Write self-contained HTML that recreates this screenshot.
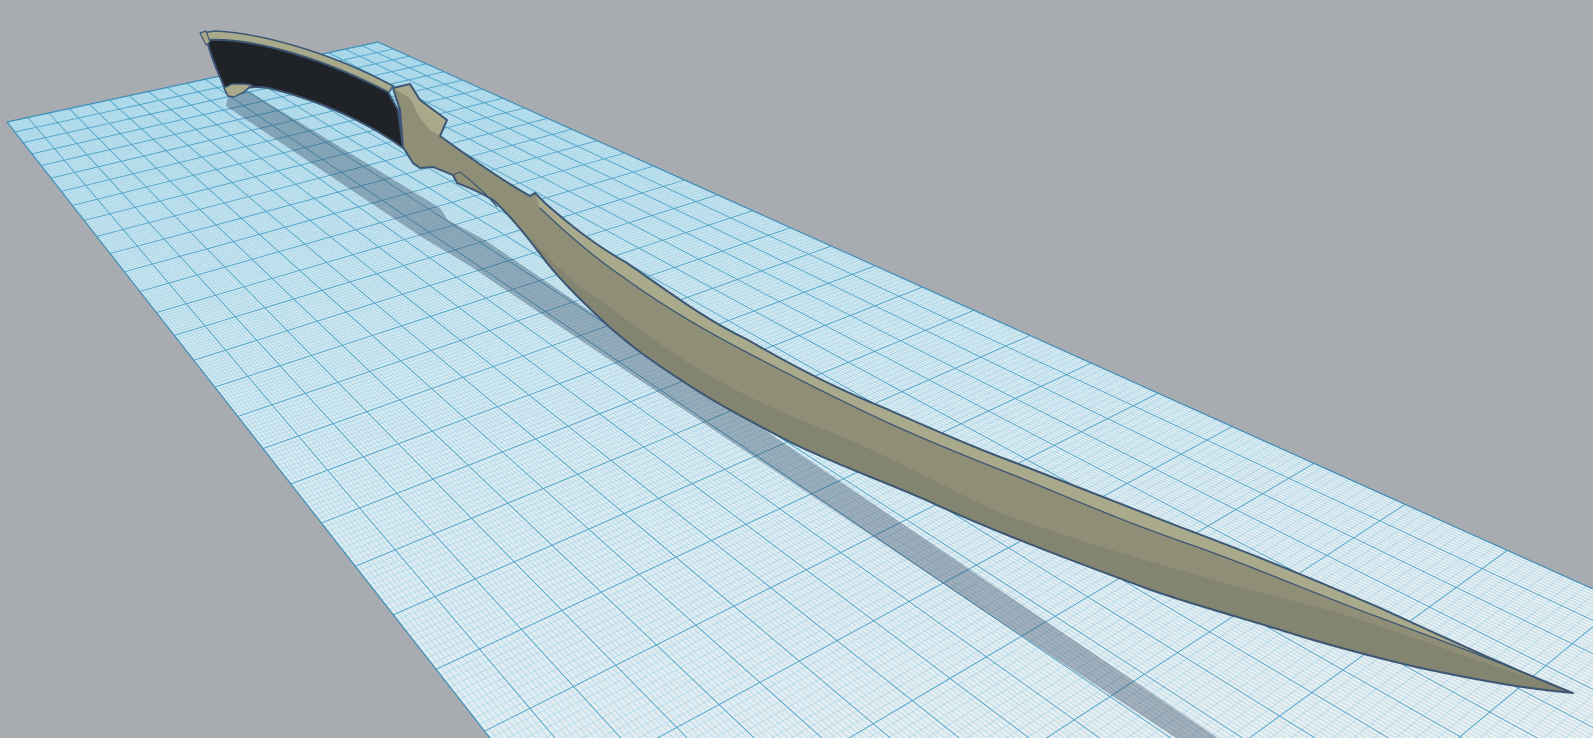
<!DOCTYPE html>
<html><head><meta charset="utf-8">
<style>
html,body{margin:0;padding:0;background:#a8acb0;overflow:hidden;width:1593px;height:738px}
svg{display:block;position:absolute;left:0;top:0}
</style></head>
<body>
<svg id="s" width="1593" height="738" viewBox="0 0 1593 738" xmlns="http://www.w3.org/2000/svg">
<defs>
<clipPath id="pc"><path d="M7,122 L378,42 L1593,589 L1593,738 L490,738 Z"/></clipPath>
<linearGradient id="pg" x1="0" y1="0" x2="1" y2="1">
<stop offset="0" stop-color="#c8e3ee"/><stop offset="0.45" stop-color="#dcebf1"/><stop offset="1" stop-color="#eaeef0"/>
</linearGradient>
</defs>
<path d="M7,122 L378,42 L1593,589 L1593,738 L490,738 Z" fill="url(#pg)"/>
<g id="grid" clip-path="url(#pc)"></g>
<path d="M7,122 L378,42 L1593,589 M490,738 L7,122" fill="none" stroke="#3f8fb8" stroke-width="1.2"/>
<!-- shadow -->
<path d="M230,90 L250,92 L440,208 L448,220 L485,240 L1000,590 L1218,738 L1176,738 L985,612 L470,266 L420,236 L226,106 Z" fill="rgba(40,60,85,0.35)"/>
<!-- blade -->
<g stroke-linejoin="round">
<path d="M393,88 L410,84 L420,100 L447,120 L440,136 C480,165 510,185 530,196 L535,193 L545,203 C570,225 595,245 627,263 C680,300 710,322 748,340 C800,370 840,390 882,407 C930,428 970,446 1016,463 C1080,488 1130,508 1180,527 C1250,553 1310,578 1378,607 C1450,640 1510,668 1573,693 C1540,690 1500,685 1416,667 C1370,656 1340,648 1303,637 C1250,620 1200,607 1151,590 C1070,560 990,530 926,500 C880,480 840,466 792,443 C750,421 715,403 681,380 C650,360 628,344 605,323 C585,304 565,285 547,263 C530,240 510,215 493,200 C480,192 470,188 457,183 L453,175 L433,167 L420,168 L413,163 L403,147 L400,110 Z" fill="#8e8f76"/>
<path d="M525,230 C550,262 575,285 600,300 C640,330 670,352 700,370 C750,400 800,420 850,440 C900,462 950,490 1000,513 C1060,535 1120,553 1180,570 C1240,588 1290,600 1340,613 C1420,640 1500,668 1573,693 C1540,690 1500,685 1416,667 C1370,656 1340,648 1303,637 C1250,620 1200,607 1151,590 C1070,560 990,530 926,500 C880,480 840,466 792,443 C750,421 715,403 681,380 C650,360 628,344 605,323 C585,304 565,285 547,263 C540,252 532,240 525,230 Z" fill="#848570"/>
<path d="M535,193 L545,203 C570,225 595,245 627,263 C680,300 710,322 748,340 C800,370 840,390 882,407 C930,428 970,446 1016,463 C1080,488 1130,508 1180,527 C1250,553 1310,578 1378,607 C1450,640 1510,668 1573,693 C1500,662 1440,640 1378,617 C1310,592 1250,565 1180,541 C1120,520 1070,498 1016,476 C970,458 925,440 882,420 C835,398 790,375 748,353 C700,328 660,304 623,277 C595,258 565,232 540,208 Z" fill="#a8aa8b"/>
<path d="M393,88 L410,84 L420,100 L447,120 L440,136 L430,130 L420,118 L410,98 Z" fill="#a8aa8b"/>
<path d="M540,208 C565,232 595,258 623,277 C660,304 700,328 748,353 C790,375 835,398 882,420 C925,440 970,458 1016,476 C1070,498 1120,520 1180,541 C1250,565 1310,592 1378,617 C1440,640 1500,662 1573,693" fill="none" stroke="#3d5673" stroke-width="1.3"/>
<path d="M453,175 L460,172 C470,180 485,192 497,207" fill="none" stroke="#3d5673" stroke-width="1.2"/>
<path d="M393,88 L410,84 L420,100 L447,120 L440,136 C480,165 510,185 530,196 L535,193 L545,203 C570,225 595,245 627,263 C680,300 710,322 748,340 C800,370 840,390 882,407 C930,428 970,446 1016,463 C1080,488 1130,508 1180,527 C1250,553 1310,578 1378,607 C1450,640 1510,668 1573,693 C1540,690 1500,685 1416,667 C1370,656 1340,648 1303,637 C1250,620 1200,607 1151,590 C1070,560 990,530 926,500 C880,480 840,466 792,443 C750,421 715,403 681,380 C650,360 628,344 605,323 C585,304 565,285 547,263 C530,240 510,215 493,200 C480,192 470,188 457,183 L453,175 L433,167 L420,168 L413,163 L403,147 L400,110 Z" fill="none" stroke="#3d5673" stroke-width="2"/>
<!-- handle -->
<path d="M202,33 L215,31 C260,33 330,52 393,86 L388,94 C322,60 260,42 208,41 Z" fill="#a8aa8b" stroke="#3d5673" stroke-width="1.5"/>
<path d="M207,40 C245,38 310,52 388,92 L398,110 L403,148 C370,124 320,100 268,88 C256,86 246,87 240,91 L233,95 L226,92 C222,80 212,62 207,40 Z" fill="#1f2226" stroke="#3d5673" stroke-width="2"/>
<path d="M224,88 L232,84 L245,84 L252,85 L244,92 L234,97 L228,96 Z" fill="#a8aa8b" stroke="#3d5673" stroke-width="1.5"/>
<path d="M200,33 L206,31 L210,42 L206,45 Z" fill="#a8aa8b" stroke="#3d5673" stroke-width="1.2"/>
</g>
</svg>
<script>
(function(){
function inter(p1,p2,p3,p4){var x1=p1[0],y1=p1[1],x2=p2[0],y2=p2[1],x3=p3[0],y3=p3[1],x4=p4[0],y4=p4[1];
 var dd=(x1-x2)*(y3-y4)-(y1-y2)*(x3-x4);
 var px=((x1*y2-y1*x2)*(x3-x4)-(x1-x2)*(x3*y4-y3*x4))/dd, py=((x1*y2-y1*x2)*(y3-y4)-(y1-y2)*(x3*y4-y3*x4))/dd;return [px,py];}
var A=[7,122],B=[378,42],E=[490,738],F=[1593,589];
var VP2=[A[0]+(B[0]-A[0])*8,A[1]+(B[1]-A[1])*8];
var C=[A[0]+(E[0]-A[0])*0.8,A[1]+(E[1]-A[1])*0.8];
var D=inter(B,F,C,VP2);
var x0=A[0],y0=A[1],x1=B[0],y1=B[1],x2=D[0],y2=D[1],x3=C[0],y3=C[1];
var dx1=x1-x2,dy1=y1-y2,dx2=x3-x2,dy2=y3-y2,dx3=x0-x1+x2-x3,dy3=y0-y1+y2-y3;
var den=dx1*dy2-dy1*dx2;
var g=(dx3*dy2-dy3*dx2)/den,h=(dx1*dy3-dy1*dx3)/den;
var a=x1-x0+g*x1,b=x3-x0+h*x3,c=x0,d=y1-y0+g*y1,e=y3-y0+h*y3,f=y0;
function P(s,t){var w=g*s+h*t+1;return [(a*s+b*t+c)/w,(d*s+e*t+f)/w];}
var NS=20,NT=22,U=4;
var minor=[],major=[];
function seg(p,q){return "M"+p[0].toFixed(1)+","+p[1].toFixed(1)+"L"+q[0].toFixed(1)+","+q[1].toFixed(1);}
for(var i=0;i<=NT*10*U;i++){var t=i/(NT*10);var w1=h*t+1,w2=g+h*t+1;if(w1<=0.02||w2<=0.02)break;
 var p=P(0,t),q=P(1,t);if(p[1]>900&&q[0]>1700)break;
 (i%10==0?major:minor).push(seg(p,q));}
for(var k=0;k<=NS*10;k++){var s=k/(NS*10);var tt=U;while(g*s+h*tt+1<=0.05)tt*=0.9;
 (k%10==0?major:minor).push(seg(P(s,0),P(s,tt)));}
var ns="http://www.w3.org/2000/svg",G=document.getElementById("grid");
var p1=document.createElementNS(ns,"path");p1.setAttribute("d",minor.join(""));p1.setAttribute("stroke","#9fd4e8");p1.setAttribute("stroke-width","0.55");p1.setAttribute("fill","none");G.appendChild(p1);
var p2=document.createElementNS(ns,"path");p2.setAttribute("d",major.join(""));p2.setAttribute("stroke","#4aa2c9");p2.setAttribute("stroke-width","0.9");p2.setAttribute("fill","none");G.appendChild(p2);
})();
</script>
</body></html>
